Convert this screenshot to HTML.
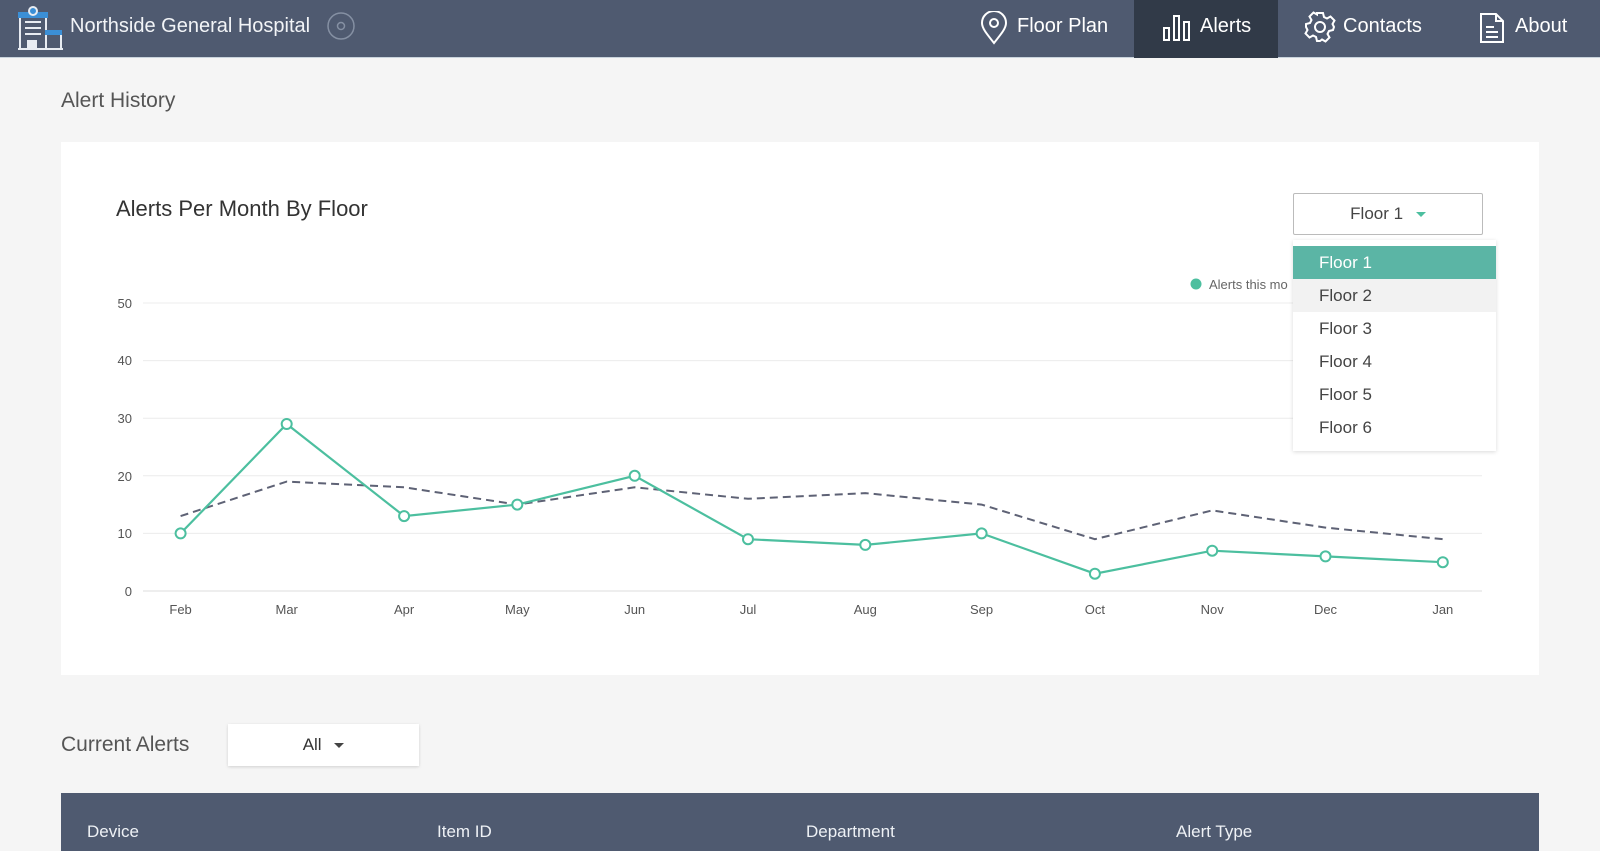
<!DOCTYPE html>
<html><head><meta charset="utf-8"><style>
*{margin:0;padding:0;box-sizing:border-box}
body{width:1600px;height:851px;overflow:hidden;background:#f5f5f5;font-family:"Liberation Sans",sans-serif;position:relative}
.nav{position:absolute;left:0;top:0;width:1600px;height:58px;background:#4f5a70;color:#fff;border-bottom:1px solid #c9d3dc}
.t{position:absolute;white-space:nowrap}
.card{position:absolute;left:61px;top:142px;width:1478px;height:533px;background:#fff}
.dd{position:absolute;background:#fff}
.item{position:absolute;left:0;width:203px;height:33px;font-size:17px;color:#444;padding-left:26px;line-height:33px}
</style></head><body>
<div class="nav">
 <svg class="t" style="left:17px;top:5px" width="48" height="46" viewBox="0 0 48 46" fill="none" stroke="#e8ecf2" stroke-width="2">
  <rect x="3" y="10" width="26" height="34" fill="none"/><rect x="2" y="8" width="28" height="4" fill="#3b8fd6" stroke="#3b8fd6"/>
  <circle cx="16" cy="6" r="4" fill="#3b8fd6" stroke="#e8ecf2"/>
  <line x1="8" y1="17" x2="24" y2="17"/><line x1="8" y1="23" x2="24" y2="23"/><line x1="8" y1="29" x2="24" y2="29"/>
  <rect x="29" y="27" width="15" height="17"/><rect x="29" y="26" width="15" height="3" fill="#3b8fd6" stroke="#3b8fd6"/>
  <rect x="11" y="36" width="8" height="8" fill="#e8ecf2"/><line x1="1" y1="44" x2="46" y2="44"/>
 </svg>
 <div class="t" style="left:70px;top:15px;font-size:20px;color:#f2f4f7">Northside General Hospital</div>
 <svg class="t" style="left:326px;top:11px" width="30" height="30"><circle cx="15" cy="15" r="13" fill="none" stroke="#8590a3" stroke-width="1.5"/><circle cx="15" cy="15" r="3.5" fill="none" stroke="#8590a3" stroke-width="1.5"/></svg>
 <svg class="t" style="left:980px;top:11px" width="28" height="34" viewBox="0 0 28 34" fill="none" stroke="#fff" stroke-width="2"><path d="M14 32C6 22 2 17 2 12a12 12 0 0 1 24 0c0 5-4 10-12 20z"/><circle cx="14" cy="12" r="4"/></svg>
 <div class="t" style="left:1017px;top:15px;font-size:20px">Floor Plan</div>
 <div class="t" style="left:1134px;top:0;width:144px;height:58px;background:#313a48"></div>
 <svg class="t" style="left:1162px;top:14px" width="30" height="28" viewBox="0 0 30 28" fill="none" stroke="#fff" stroke-width="2"><rect x="2" y="14" width="5" height="12"/><rect x="12" y="2" width="5" height="24"/><rect x="22" y="8" width="5" height="18"/></svg>
 <div class="t" style="left:1200px;top:15px;font-size:20px">Alerts</div>
 <svg class="t" style="left:1304px;top:11px" width="32" height="32" viewBox="0 0 32 32" fill="none" stroke="#fff" stroke-width="2"><path d="M13 2h6l1 4 3 1.5 3.5-2 4 4-2 3.5L30 16l-1 3-4 1-1.5 3 2 3.5-4 4-3.5-2L16 30l-3 0-1-4-3-1.5-3.5 2-4-4 2-3.5L2 16l0-3 4-1 1.5-3-2-3.5 4-4 3.5 2z"/><circle cx="16" cy="16" r="5"/></svg>
 <div class="t" style="left:1343px;top:15px;font-size:20px">Contacts</div>
 <svg class="t" style="left:1479px;top:12px" width="26" height="32" viewBox="0 0 26 32" fill="none" stroke="#fff" stroke-width="2"><path d="M2 2h15l7 7v21H2z"/><path d="M17 2v7h7"/><line x1="7" y1="15" x2="15" y2="15"/><line x1="7" y1="20" x2="19" y2="20"/><line x1="7" y1="25" x2="19" y2="25"/></svg>
 <div class="t" style="left:1515px;top:15px;font-size:20px">About</div>
</div>
<div class="t" style="left:61px;top:89px;font-size:21px;color:#555">Alert History</div>
<div class="card"></div>
<div class="t" style="left:116px;top:196px;font-size:22px;color:#333">Alerts Per Month By Floor</div>
<svg class="t" style="left:0;top:0" width="1600" height="851">
 <g stroke="#ececec" stroke-width="1">
  <line x1="143" x2="1482" y1="303" y2="303"/><line x1="143" x2="1482" y1="360.6" y2="360.6"/><line x1="143" x2="1482" y1="418.2" y2="418.2"/><line x1="143" x2="1482" y1="475.8" y2="475.8"/><line x1="143" x2="1482" y1="533.4" y2="533.4"/><line x1="143" x2="1482" y1="591" y2="591" stroke="#ddd"/>
 </g>
 <g font-size="13" fill="#555" text-anchor="end" font-family="Liberation Sans">
  <text x="132" y="308">50</text><text x="132" y="365">40</text><text x="132" y="423">30</text><text x="132" y="481">20</text><text x="132" y="538">10</text><text x="132" y="596">0</text>
 </g>
 <g font-size="13" fill="#555" text-anchor="middle" font-family="Liberation Sans">
  <text x="180.6" y="614">Feb</text><text x="286.7" y="614">Mar</text><text x="404.1" y="614">Apr</text><text x="517.3" y="614">May</text><text x="634.7" y="614">Jun</text><text x="748" y="614">Jul</text><text x="865.3" y="614">Aug</text><text x="981.6" y="614">Sep</text><text x="1094.9" y="614">Oct</text><text x="1212.2" y="614">Nov</text><text x="1325.5" y="614">Dec</text><text x="1442.8" y="614">Jan</text>
 </g>
 <polyline fill="none" stroke="#5e6275" stroke-width="2" stroke-dasharray="8,5" points="180.6,516.1 286.7,481.6 404.1,487.3 517.3,504.6 634.7,487.3 748,498.8 865.3,493.1 981.6,504.6 1094.9,539.2 1212.2,510.4 1325.5,527.6 1442.8,539.2"/>
 <polyline fill="none" stroke="#4cbf9f" stroke-width="2.2" points="180.6,533.4 286.7,424 404.1,516.1 517.3,504.6 634.7,475.8 748,539.2 865.3,544.9 981.6,533.4 1094.9,573.7 1212.2,550.7 1325.5,556.4 1442.8,562.2"/>
 <g fill="#fff" stroke="#4cbf9f" stroke-width="2">
  <circle cx="180.6" cy="533.4" r="5"/><circle cx="286.7" cy="424" r="5"/><circle cx="404.1" cy="516.1" r="5"/><circle cx="517.3" cy="504.6" r="5"/><circle cx="634.7" cy="475.8" r="5"/><circle cx="748" cy="539.2" r="5"/><circle cx="865.3" cy="544.9" r="5"/><circle cx="981.6" cy="533.4" r="5"/><circle cx="1094.9" cy="573.7" r="5"/><circle cx="1212.2" cy="550.7" r="5"/><circle cx="1325.5" cy="556.4" r="5"/><circle cx="1442.8" cy="562.2" r="5"/>
 </g>
 <circle cx="1196" cy="284" r="5.5" fill="#4cbf9f"/>
 <text x="1209" y="289" font-size="13" fill="#666" font-family="Liberation Sans">Alerts this mo</text>
</svg>
<div class="dd" style="left:1293px;top:193px;width:190px;height:42px;border:1px solid #bbb;border-radius:2px;font-size:17px;color:#444;text-align:center;line-height:40px">Floor 1 <span style="display:inline-block;width:0;height:0;border-left:5px solid transparent;border-right:5px solid transparent;border-top:5px solid #4cbf9f;vertical-align:middle;margin-left:8px"></span></div>
<div class="dd" style="left:1293px;top:240px;width:203px;height:211px;box-shadow:0 1px 4px rgba(0,0,0,.15)">
 <div class="item" style="top:6px;background:#5bb5a5;color:#fff">Floor 1</div>
 <div class="item" style="top:39px;background:#f2f2f2">Floor 2</div>
 <div class="item" style="top:72px">Floor 3</div>
 <div class="item" style="top:105px">Floor 4</div>
 <div class="item" style="top:138px">Floor 5</div>
 <div class="item" style="top:171px">Floor 6</div>
</div>
<div class="t" style="left:61px;top:733px;font-size:21px;color:#555">Current Alerts</div>
<div class="dd" style="left:228px;top:724px;width:191px;height:42px;box-shadow:0 1px 3px rgba(0,0,0,.15);font-size:17px;color:#333;text-align:center;line-height:42px">All <span style="display:inline-block;width:0;height:0;border-left:5px solid transparent;border-right:5px solid transparent;border-top:5px solid #444;vertical-align:middle;margin-left:8px"></span></div>
<div class="t" style="left:61px;top:793px;width:1478px;height:58px;background:#4f5a70;color:#eef1f5;font-size:17px">
 <span class="t" style="left:26px;top:29px">Device</span><span class="t" style="left:376px;top:29px">Item ID</span><span class="t" style="left:745px;top:29px">Department</span><span class="t" style="left:1115px;top:29px">Alert Type</span>
</div>
</body></html>
